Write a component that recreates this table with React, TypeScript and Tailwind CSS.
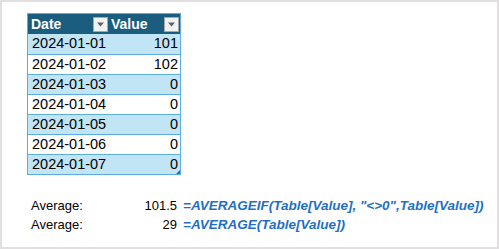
import React from "react";

const rows = [
  ["2024-01-01", "101"],
  ["2024-01-02", "102"],
  ["2024-01-03", "0"],
  ["2024-01-04", "0"],
  ["2024-01-05", "0"],
  ["2024-01-06", "0"],
  ["2024-01-07", "0"],
];

function Drop() {
  return (
    <div className="w-[15px] h-[15px] bg-[#f3f3f3] border border-[#a6a6a6] flex items-center justify-center">
      <svg width="9" height="5" viewBox="0 0 9 5">
        <path d="M1 0.5 L8 0.5 L4.5 4.5 Z" fill="#606060" />
      </svg>
    </div>
  );
}

export default function App() {
  return (
    <div
      className="w-[499px] h-[249px] bg-white border-2 border-[#e1dfdf] pl-[25px] pt-[11px]"
      style={{ fontFamily: '"Liberation Sans", Arial, sans-serif' }}
    >
      <div className="w-[154px] border border-[#5aaee0] relative">
        <div className="h-[20px] bg-[#1b5d7e] flex items-center text-white font-bold text-[14px]">
          <div className="w-[81px] flex items-center justify-between pl-[3px] pr-[1px]">
            <span>Date</span>
            <Drop />
          </div>
          <div className="flex-1 flex items-center justify-between pl-[2px] pr-[1px]">
            <span>Value</span>
            <Drop />
          </div>
        </div>
        {rows.map(([d, v], i) => (
          <div
            key={d}
            className={`h-[20px] flex items-center text-[14.5px] text-black ${
              i % 2 === 0 ? "bg-[#c1e5f5]" : "bg-white"
            } ${i > 0 ? "border-t border-[#5aaee0]" : ""}`}
          >
            <div className="w-[81px] pl-[4px]">{d}</div>
            <div className="flex-1 text-right pr-[2px]">{v}</div>
          </div>
        ))}
        <div className="absolute right-0 bottom-0 w-0 h-0 border-l-[4px] border-l-transparent border-b-[4px] border-b-[#3f5fbf]" />
      </div>
      <div className="mt-[21px] text-[13px] leading-[19px] text-black">
        <div className="flex">
          <div className="w-[100px] pl-[4px]">Average:</div>
          <div className="w-[50px] text-right">101.5</div>
          <div className="pl-[6px] text-[13.5px] text-[#1f6fc5] font-bold italic whitespace-nowrap">
            =AVERAGEIF(Table[Value], "&lt;&gt;0",Table[Value])
          </div>
        </div>
        <div className="flex">
          <div className="w-[100px] pl-[4px]">Average:</div>
          <div className="w-[50px] text-right">29</div>
          <div className="pl-[6px] text-[13.5px] text-[#1f6fc5] font-bold italic whitespace-nowrap">
            =AVERAGE(Table[Value])
          </div>
        </div>
      </div>
    </div>
  );
}
